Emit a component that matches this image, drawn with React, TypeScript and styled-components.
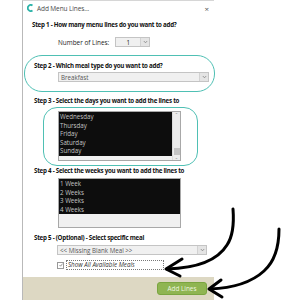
import React from "react";
import styled, { createGlobalStyle } from "styled-components";

const GlobalStyle = createGlobalStyle`
	html, body {
		margin: 0;
		padding: 0;
		background: #ffffff;
	}
	body {
		font-family: "Open Sans", "DejaVu Sans", sans-serif;
	}
`;

const Page = styled.div`
	position: relative;
	width: 300px;
	height: 300px;
	overflow: hidden;
	background: #ffffff;
`;

const Window = styled.div`
	margin-left: 22px;
	width: 192px;
	height: 300px;
	border-left: 1px solid #b9b9b9;
	border-top: 1px solid #d6d6d6;
	box-sizing: border-box;
	display: flex;
	flex-direction: column;
	background: #ffffff;
`;

const TitleBar = styled.div`
	height: 14px;
	display: flex;
	align-items: center;
	padding: 0 5px 0 4px;
	gap: 3px;
	font-size: 6.5px;
	color: #4a4a4a;
`;

const TitleText = styled.span`
	flex: 1;
	letter-spacing: -0.1px;
`;

const Close = styled.span`
	font-size: 8px;
	color: #555;
`;

const Body = styled.div`
	flex: 1;
	display: flex;
	flex-direction: column;
`;

const StepLabel = styled.div<{ $indent?: number; $top?: number }>`
	font-size: 6.2px;
	font-weight: 700;
	color: #111;
	letter-spacing: -0.25px;
	padding-left: ${(p) => p.$indent ?? 9}px;
	margin-top: ${(p) => p.$top ?? 0}px;
	line-height: 9px;
`;

const Row = styled.div<{ $indent: number; $top?: number }>`
	display: flex;
	align-items: center;
	gap: 6px;
	padding-left: ${(p) => p.$indent}px;
	margin-top: ${(p) => p.$top ?? 0}px;
`;

const FieldLabel = styled.span`
	font-size: 6.4px;
	color: #222;
`;

const Select = styled.div<{ $width: number; $height?: number }>`
	width: ${(p) => p.$width}px;
	height: ${(p) => p.$height ?? 10}px;
	box-sizing: border-box;
	border: 1px solid #c4c4c4;
	background: #f0f0f0;
	display: flex;
	align-items: center;
	font-size: 6.2px;
	color: #444;
`;

const SelectText = styled.span<{ $center?: boolean }>`
	flex: 1;
	padding-left: ${(p) => (p.$center ? 0 : 2)}px;
	text-align: ${(p) => (p.$center ? "center" : "left")};
	color: ${(p) => (p.$center ? "#222" : "#555")};
	white-space: nowrap;
`;

const Chevron = styled.span`
	width: 8px;
	height: 100%;
	border-left: 1px solid #d2d2d2;
	background: #e4e4e4;
	display: flex;
	align-items: center;
	justify-content: center;
`;

const Highlight = styled.div<{ $left: number; $width: number; $height: number; $radius: number; $top: number }>`
	margin-left: ${(p) => p.$left}px;
	margin-top: ${(p) => p.$top}px;
	width: ${(p) => p.$width}px;
	height: ${(p) => p.$height}px;
	box-sizing: border-box;
	border: 1.5px solid #4fc0b4;
	border-radius: ${(p) => p.$radius}px;
	display: flex;
	flex-direction: column;
`;

const ListBox = styled.div<{ $height: number }>`
	width: 123px;
	height: ${(p) => p.$height}px;
	box-sizing: border-box;
	border: 1px solid #a8a8a8;
	background: #f0f0f0;
	display: flex;
`;

const ListItems = styled.div`
	flex: 1;
	display: flex;
	flex-direction: column;
`;

const Items = styled.div`
	background: #0d0d0d;
	display: flex;
	flex-direction: column;
	padding-top: 1px;
`;

const Item = styled.div`
	font-size: 6.2px;
	line-height: 8.6px;
	color: #c4c4c4;
	padding-left: 1px;
`;

const Scroll = styled.div`
	width: 7px;
	background: #ececec;
	border-left: 1px solid #dcdcdc;
	display: flex;
	flex-direction: column;
	justify-content: space-between;
	align-items: center;
	font-size: 4px;
	color: #777;
`;

const Thumb = styled.div`
	width: 6px;
	height: 7px;
	background: #c4c4c4;
	margin-top: auto;
`;

const CheckRow = styled.div`
	display: flex;
	align-items: center;
	gap: 2px;
	padding-left: 34px;
	margin-top: 5px;
`;

const CheckBox = styled.div`
	width: 5px;
	height: 5px;
	border: 1px solid #999;
	display: flex;
	align-items: center;
	justify-content: center;
`;

const CheckLabel = styled.div`
	width: 98px;
	height: 10px;
	box-sizing: border-box;
	border: 1px dotted #777;
	font-size: 6.2px;
	font-style: italic;
	color: #333;
	line-height: 8px;
	padding-left: 1px;
`;

const Footer = styled.div`
	height: 23px;
	margin-top: auto;
	background: #ddd8c3;
	display: flex;
	align-items: center;
	justify-content: flex-end;
	padding-right: 7px;
`;

const Button = styled.div`
	width: 50px;
	height: 13px;
	border-radius: 3px;
	background: #8fb552;
	border: 1px solid #7aa540;
	box-sizing: border-box;
	color: #eef5e0;
	font-size: 6.4px;
	display: flex;
	align-items: center;
	justify-content: center;
`;

const Arrows = styled.svg`
	position: absolute;
	left: 0;
	top: 0;
	pointer-events: none;
`;

const ChevronIcon = () => (
	<svg width="5" height="4" viewBox="0 0 5 4">
		<path d="M0.8 1 L2.5 2.8 L4.2 1" stroke="#777" strokeWidth="0.7" fill="none" />
	</svg>
);

const Drop = ({ text, width, center }: { text: string; width: number; center?: boolean }) => (
	<Select $width={width}>
		<SelectText $center={center}>{text}</SelectText>
		<Chevron>
			<ChevronIcon />
		</Chevron>
	</Select>
);

const days = ["Wednesday", "Thursday", "Friday", "Saturday", "Sunday"];
const weeks = ["1 Week", "2 Weeks", "3 Weeks", "4 Weeks"];

export default function App() {
	return (
		<Page>
			<GlobalStyle />
			<Window>
				<TitleBar>
					<svg width="7" height="8" viewBox="0 0 7 8">
						<path d="M5.5 1.5 A3 3 0 1 0 5.5 6.5" stroke="#2bb3a8" strokeWidth="1.8" fill="none" />
					</svg>
					<TitleText>Add Menu Lines...</TitleText>
					<Close>×</Close>
				</TitleBar>
				<Body>
					<StepLabel $top={5}>Step 1 - How many menu lines do you want to add?</StepLabel>
					<Row $indent={35} $top={8}>
						<FieldLabel>Number of Lines:</FieldLabel>
						<Drop text="1" width={35} center />
					</Row>
					<Highlight $left={1} $width={191} $height={37} $radius={18} $top={8}>
						<StepLabel $top={5}>Step 2 - Which meal type do you want to add?</StepLabel>
						<Row $indent={33} $top={2}>
							<Drop text="Breakfast" width={151} />
						</Row>
					</Highlight>
					<StepLabel $indent={11} $top={4}>
						Step 3 - Select the days you want to add the lines to
					</StepLabel>
					<Highlight $left={20} $width={155} $height={59} $radius={14} $top={2}>
						<Row $indent={14} $top={3}>
							<ListBox $height={50}>
								<ListItems>
									<Items>
										{days.map((d) => (
											<Item key={d}>{d}</Item>
										))}
									</Items>
								</ListItems>
								<Scroll>
									<span>⌃</span>
									<Thumb />
									<span>⌄</span>
								</Scroll>
							</ListBox>
						</Row>
					</Highlight>
					<StepLabel $indent={11} $top={0}>
						Step 4 - Select the weeks you want to add the lines to
					</StepLabel>
					<Row $indent={35} $top={3}>
						<ListBox $height={50}>
							<ListItems>
								<Items>
									{weeks.map((w) => (
										<Item key={w}>{w}</Item>
									))}
								</Items>
							</ListItems>
						</ListBox>
					</Row>
					<StepLabel $indent={11} $top={5}>
						Step 5 - (Optional) - Select specific meal
					</StepLabel>
					<Row $indent={34} $top={3}>
						<Drop text="<< Missing Blank Meal >>" width={150} />
					</Row>
					<CheckRow>
						<CheckBox>
							<svg width="4" height="4" viewBox="0 0 4 4">
								<path d="M0.5 2 L1.6 3.2 L3.6 0.6" stroke="#555" strokeWidth="0.6" fill="none" />
							</svg>
						</CheckBox>
						<CheckLabel>Show All Available Meals</CheckLabel>
					</CheckRow>
				</Body>
				<Footer>
					<Button>Add Lines</Button>
				</Footer>
			</Window>
			<Arrows width="300" height="300" viewBox="0 0 300 300">
				<g stroke="#000" strokeWidth="3" fill="none" strokeLinecap="round" strokeLinejoin="round">
					<path d="M233 209 C234 222 233 236 227 245 C219 258 200 268 167 269" />
					<path d="M182 259 L166 269 L180 276" />
					<path d="M279 229 C279 248 274 262 264 271 C252 282 235 288 210 289" />
					<path d="M221 280 L209 289 L222 297" />
				</g>
			</Arrows>
		</Page>
	);
}
